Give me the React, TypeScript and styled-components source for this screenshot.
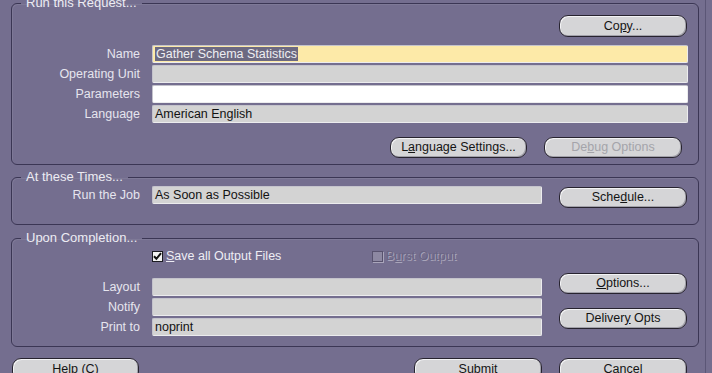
import React from 'react'
import styled, { createGlobalStyle } from 'styled-components'

const GlobalStyle = createGlobalStyle`
  html, body {
    margin: 0;
    padding: 0;
    background: #746e8f;
  }
  body {
    font-family: 'Liberation Sans', Arial, sans-serif;
  }
  * {
    box-sizing: border-box;
  }
`

const Screen = styled.div`
  width: 712px;
  height: 373px;
  overflow: hidden;
  background: #746e8f;
`

const Window = styled.div`
  width: 706px;
  height: 100%;
  border-right: 1px solid #5b5676;
  padding: 0 6px 0 11px;
  display: flex;
  flex-direction: column;
`

const Group = styled.fieldset<{ $offset: number; $pad: string }>`
  margin: ${({ $offset }) => $offset}px 0 0;
  padding: ${({ $pad }) => $pad};
  min-width: 0;
  border: 1px solid #3b3654;
  border-radius: 6px;
  box-shadow: inset 1px 1px 0 rgba(255, 255, 255, 0.08);
`

const Legend = styled.legend`
  margin-left: 9px;
  padding: 0 5px;
  font-size: 13px;
  line-height: 14px;
  color: #edecf3;
`

const TopRow = styled.div`
  display: flex;
  justify-content: flex-end;
  padding-right: 11px;
`

const FormGrid = styled.div<{ $field: string; $padRight?: number; $top?: number }>`
  display: grid;
  grid-template-columns: 128px ${({ $field }) => $field};
  grid-auto-rows: 18px;
  column-gap: 12px;
  row-gap: 2px;
  margin-top: ${({ $top }) => $top ?? 0}px;
  padding-right: ${({ $padRight }) => $padRight ?? 0}px;
`

const Label = styled.div`
  text-align: right;
  font-size: 12.5px;
  line-height: 19px;
  color: #e6e5ee;
  white-space: nowrap;
`

const tones = {
  gray: '#d3d3d3',
  yellow: '#fdeaa8',
  white: '#ffffff',
}

const Field = styled.div<{ $tone: keyof typeof tones }>`
  height: 18px;
  background: ${({ $tone }) => tones[$tone]};
  border: 1px solid #ececee;
  border-top-color: #c4c3cc;
  border-left-color: #c4c3cc;
  border-radius: 2px;
  padding: 0 2px;
  font-size: 12.5px;
  line-height: 17px;
  color: #121212;
  white-space: nowrap;
  overflow: hidden;
`

const Selected = styled.span`
  background: #6c6981;
  color: #eeeef2;
  padding: 0 1px;
`

const ActionRow = styled.div`
  display: flex;
  justify-content: flex-end;
  gap: 17px;
  padding-right: 16px;
  margin-top: 14px;
`

const Button = styled.button<{ $width: number; $height?: number; $disabled?: boolean }>`
  flex: none;
  width: ${({ $width }) => $width}px;
  height: ${({ $height }) => $height ?? 21}px;
  margin: 0;
  padding: 0;
  border: 1px solid #27232f;
  border-radius: 9px;
  background: #d5d5d7;
  box-shadow: inset 1px 1px 0 #f3f3f5, inset -1px -1px 0 #a2a1aa;
  font-family: inherit;
  font-size: 12.5px;
  line-height: 19px;
  color: ${({ $disabled }) => ($disabled ? '#a4a4aa' : '#141414')};
  text-align: center;
`

const JobRow = styled.div`
  display: flex;
  align-items: flex-start;
  gap: 17px;
`

const SideButton = styled(Button)`
  margin-top: 1px;
`

const CheckRow = styled.div`
  display: flex;
  align-items: center;
  height: 14px;
  margin-top: 1px;
  padding-left: 140px;
`

const CheckItem = styled.div<{ $width?: number; $disabled?: boolean }>`
  display: flex;
  align-items: center;
  gap: 3px;
  width: ${({ $width }) => ($width ? `${$width}px` : 'auto')};
  font-size: 12.5px;
  line-height: 14px;
  color: ${({ $disabled }) => ($disabled ? '#6a6483' : '#eeedf4')};
  text-shadow: ${({ $disabled }) => ($disabled ? '1px 1px 0 #a9a5ba' : 'none')};
`

const CheckBox = styled.span<{ $disabled?: boolean }>`
  display: inline-flex;
  width: 11px;
  height: 11px;
  border: 1px solid ${({ $disabled }) => ($disabled ? '#58526e' : '#1c1c22')};
  background: ${({ $disabled }) => ($disabled ? '#8d88a2' : '#f4f4f4')};
  box-shadow: ${({ $disabled }) => ($disabled ? '1px 1px 0 #aaa6bb' : 'none')};
`

const CompletionBody = styled.div`
  display: flex;
  align-items: flex-start;
  gap: 17px;
  margin-top: 10px;
`

const FieldColumn = styled.div`
  padding-top: 5px;
`

const ButtonStack = styled.div`
  display: flex;
  flex-direction: column;
  gap: 14px;
`

const Footer = styled.div`
  display: flex;
  align-items: flex-start;
  margin-top: 11px;
  padding: 0 12px 0 1px;
`

const Spacer = styled.div`
  flex: 1;
`

const FooterGap = styled.div`
  width: 17px;
`

const Check = () => (
  <svg width="9" height="9" viewBox="0 0 9 9">
    <path d="M1 4.2 L3.4 6.8 L8 1.2" fill="none" stroke="#111" strokeWidth="2" />
  </svg>
)

export default function App() {
  return (
    <>
      <GlobalStyle />
      <Screen>
        <Window>
          <Group $offset={-4} $pad="5px 0 6px">
            <Legend>Run this Request...</Legend>
            <TopRow>
              <Button $width={128} $height={22}>
                Co<u>p</u>y...
              </Button>
            </TopRow>
            <FormGrid $field="1fr" $padRight={10} $top={8}>
              <Label>Name</Label>
              <Field $tone="yellow">
                <Selected>Gather Schema Statistics</Selected>
              </Field>
              <Label>Operating Unit</Label>
              <Field $tone="gray" />
              <Label>Parameters</Label>
              <Field $tone="white" />
              <Label>Language</Label>
              <Field $tone="gray">American English</Field>
            </FormGrid>
            <ActionRow>
              <Button $width={137}>
                L<u>a</u>nguage Settings...
              </Button>
              <Button $width={138} $disabled>
                De<u>b</u>ug Options
              </Button>
            </ActionRow>
          </Group>

          <Group $offset={5} $pad="2px 0 16px">
            <Legend>At these Times...</Legend>
            <JobRow>
              <FormGrid $field="390px">
                <Label>Run the Job</Label>
                <Field $tone="gray">As Soon as Possible</Field>
              </FormGrid>
              <SideButton $width={128}>
                Sche<u>d</u>ule...
              </SideButton>
            </JobRow>
          </Group>

          <Group $offset={6} $pad="3px 0 10px">
            <Legend>Upon Completion...</Legend>
            <CheckRow>
              <CheckItem $width={220}>
                <CheckBox>
                  <Check />
                </CheckBox>
                <span>
                  <u>S</u>ave all Output Files
                </span>
              </CheckItem>
              <CheckItem $disabled>
                <CheckBox $disabled />
                <span>
                  B<u>u</u>rst Output
                </span>
              </CheckItem>
            </CheckRow>
            <CompletionBody>
              <FieldColumn>
                <FormGrid $field="390px">
                  <Label>Layout</Label>
                  <Field $tone="gray" />
                  <Label>Notify</Label>
                  <Field $tone="gray" />
                  <Label>Print to</Label>
                  <Field $tone="gray">noprint</Field>
                </FormGrid>
              </FieldColumn>
              <ButtonStack>
                <Button $width={128}>
                  <u>O</u>ptions...
                </Button>
                <Button $width={128}>
                  Deliver<u>y</u> Opts
                </Button>
              </ButtonStack>
            </CompletionBody>
          </Group>

          <Footer>
            <Button $width={127} $height={23}>
              Help (C)
            </Button>
            <Spacer />
            <Button $width={128} $height={23}>
              Submit
            </Button>
            <FooterGap />
            <Button $width={128} $height={23}>
              Cancel
            </Button>
          </Footer>
        </Window>
      </Screen>
    </>
  )
}
